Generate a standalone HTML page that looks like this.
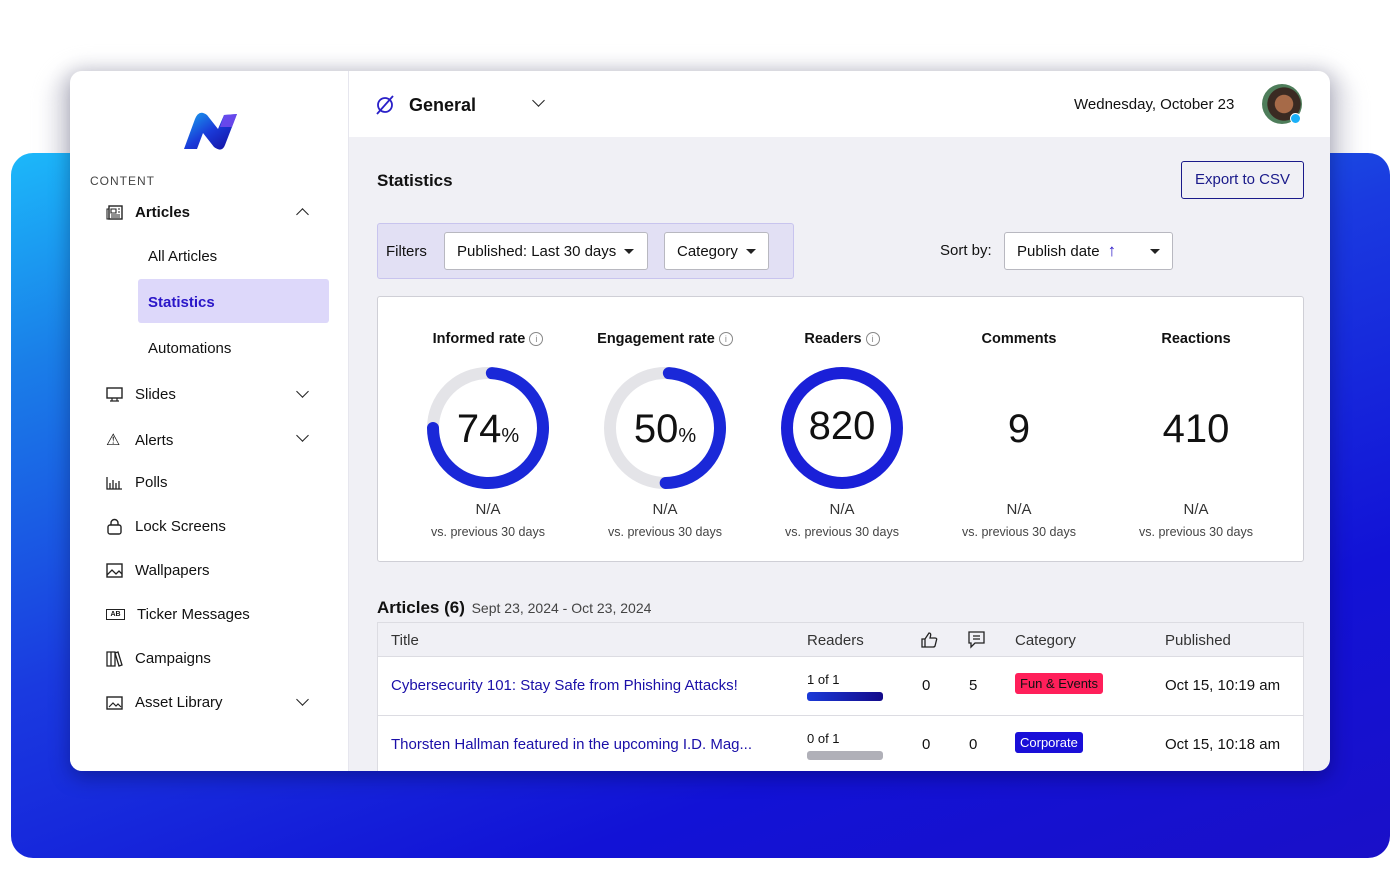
<!DOCTYPE html>
<html><head><meta charset="utf-8"><style>
*{box-sizing:border-box;margin:0;padding:0}
body{width:1400px;height:870px;background:#fff;font-family:"Liberation Sans","DejaVu Sans",sans-serif;color:#111;position:relative;overflow:hidden}
.bg{position:absolute;left:11px;top:153px;width:1379px;height:705px;border-radius:22px;background:linear-gradient(160deg,#1cb8fa 0%,#1a7ee8 18%,#1a3ae0 45%,#1212d6 75%,#1a10c8 100%)}
.shadow{position:absolute;left:48px;top:62px;width:1305px;height:748px;border-radius:40px;background:rgba(200,200,215,.35);filter:blur(8px)}
.card{position:absolute;left:70px;top:71px;width:1260px;height:700px;border-radius:12px;background:#f0f0f5;overflow:hidden;box-shadow:0 6px 20px rgba(0,0,40,.35)}
.side{position:absolute;left:0;top:0;width:279px;height:700px;background:#fff;border-right:1px solid #e6e6ee}
.hdr{position:absolute;left:279px;top:0;right:0;height:66px;background:#fff}
.t{position:absolute;white-space:nowrap}
.nav{position:absolute;left:36px;font-size:15px;display:flex;align-items:center;gap:12px}
.chev{position:absolute;left:228px;width:9px;height:9px;border-right:1.5px solid #222;border-bottom:1.5px solid #222;transform:rotate(45deg)}
.btn{position:absolute;background:#fff;border:1px solid #b8b8c0;border-radius:3px;font-size:15px;display:flex;align-items:center;padding-left:12px}
.tri{display:inline-block;width:0;height:0;border-left:5px solid transparent;border-right:5px solid transparent;border-top:5px solid #222;margin-left:8px}
.col{position:absolute;width:170px;text-align:center}
.col h4{font-size:14.5px;font-weight:bold;position:absolute;top:34px;width:100%}
.col .na{position:absolute;top:204px;width:100%;font-size:15px;color:#333}
.col .vs{position:absolute;top:228px;width:100%;font-size:12.5px;color:#444}
.big{position:absolute;top:110px;width:100%;font-size:40px}
.info{display:inline-block;width:14px;height:14px;border:1px solid #888;border-radius:50%;font-size:9px;line-height:12px;color:#888;font-weight:normal;vertical-align:1px}
.row{position:absolute;left:307px;width:927px;background:#fff;border:1px solid #dcdce2;border-top:none;font-size:15px}
.link{color:#1a0fa8}
.pill{position:absolute;color:#fff;font-size:13px;padding:3px 5px;border-radius:3px}
</style></head><body>
<div class="shadow"></div>
<div class="bg"></div>
<div class="card">
 <div class="side">
  <svg style="position:absolute;left:113px;top:38px" width="54" height="44" viewBox="0 0 54 44"><defs><linearGradient id="lg" x1="0" y1="0" x2="1" y2="1"><stop offset="0" stop-color="#1aa8f0"/><stop offset=".5" stop-color="#1a3ad8"/><stop offset="1" stop-color="#140a9a"/></linearGradient></defs><path d="M1 40 L12 10 Q16 0 24 6 L35 20 L41 6 L54 5 L42 36 Q39 44 31 38 L20 24 L14 40 Z" fill="url(#lg)"/><path d="M41 6 L54 5 L49 18 L37 18Z" fill="#7a4cf0" opacity=".8"/></svg>
  <div class="t" style="left:20px;top:103px;font-size:12px;letter-spacing:1px;color:#444">CONTENT</div>
  <div class="nav" style="top:133px;font-weight:bold"><svg width="17" height="15" viewBox="0 0 17 15"><rect x="3" y="1" width="13" height="13" fill="none" stroke="#222" stroke-width="1.4"/><path d="M3 4H1v10h2M5 4h5v4H5zM12 4h2M12 7h2M5 10h9M5 12h9" fill="none" stroke="#222" stroke-width="1.1"/></svg>Articles</div>
  <div class="chev" style="top:139px;transform:rotate(225deg)"></div>
  <div class="t" style="left:78px;top:177px;font-size:15px">All Articles</div>
  <div class="t" style="left:68px;top:208px;width:191px;height:44px;background:#ddd8fa;border-radius:3px"></div>
  <div class="t" style="left:78px;top:223px;font-size:15px;font-weight:bold;color:#2a16c8">Statistics</div>
  <div class="t" style="left:78px;top:269px;font-size:15px">Automations</div>
  <div class="nav" style="top:315px"><svg width="17" height="15" viewBox="0 0 17 15"><rect x="1" y="1" width="15" height="10" fill="none" stroke="#222" stroke-width="1.4"/><path d="M6 11v3M11 11v3M4 14h9" stroke="#222" stroke-width="1.2"/></svg>Slides</div><div class="chev" style="top:316px"></div>
  <div class="nav" style="top:359px"><span style="font-size:16px;width:17px">⚠</span>Alerts</div><div class="chev" style="top:360px"></div>
  <div class="nav" style="top:403px"><svg width="17" height="15" viewBox="0 0 17 15"><path d="M1 2v12h15M4 14V8M7 14V5M10 14V8M13 14V6" fill="none" stroke="#222" stroke-width="1.3"/></svg>Polls</div>
  <div class="nav" style="top:447px"><svg width="17" height="17" viewBox="0 0 17 17"><rect x="2" y="7" width="13" height="9" rx="2" fill="none" stroke="#222" stroke-width="1.4"/><path d="M5 7V5a3.5 3.5 0 0 1 7 0v2" fill="none" stroke="#222" stroke-width="1.4"/></svg>Lock Screens</div>
  <div class="nav" style="top:491px"><svg width="17" height="15" viewBox="0 0 17 15"><rect x="1" y="1" width="15" height="13" fill="none" stroke="#222" stroke-width="1.4"/><path d="M1 12l5-5 4 4 3-3 3 3" fill="none" stroke="#222" stroke-width="1.3"/></svg>Wallpapers</div>
  <div class="nav" style="top:535px"><span style="display:inline-block;width:19px;height:11px;border:1.4px solid #222;font-size:7px;font-weight:bold;line-height:9px;text-align:center">AB</span>Ticker Messages</div>
  <div class="nav" style="top:579px"><svg width="17" height="17" viewBox="0 0 17 17"><path d="M1 2h4v14H1zM5 2h4v14H5zM9 3l3-1 4 13-3 1z" fill="none" stroke="#222" stroke-width="1.3"/></svg>Campaigns</div>
  <div class="nav" style="top:623px"><svg width="17" height="15" viewBox="0 0 17 15"><rect x="1" y="2" width="15" height="12" fill="none" stroke="#222" stroke-width="1.4"/><path d="M3 12l4-4 3 3 2-2 3 3" fill="none" stroke="#222" stroke-width="1.2"/></svg>Asset Library</div><div class="chev" style="top:624px"></div>
 </div>
 <div class="hdr">
  <svg style="position:absolute;left:25px;top:23px" width="22" height="22" viewBox="0 0 22 22"><circle cx="11" cy="11" r="7" fill="none" stroke="#2a20c8" stroke-width="1.8"/><path d="M3 20 L19 2" stroke="#2a20c8" stroke-width="1.8"/></svg>
  <div class="t" style="left:60px;top:24px;font-size:18px;font-weight:bold">General</div>
  <div class="chev" style="left:185px;top:25px;border-color:#222"></div>
  <div class="t" style="left:725px;top:25px;font-size:15px">Wednesday, October 23</div>
  <div class="t" style="left:913px;top:13px;width:40px;height:40px;border-radius:50%;background:radial-gradient(circle at 55% 50%,#a66a48 0 30%,#3a2a22 32% 55%,#4e7d5a 57%)"></div>
  <div class="t" style="left:941px;top:42px;width:11px;height:11px;border-radius:50%;background:#1ab0f8;border:1.5px solid #fff"></div>
 </div>
 <div class="t" style="left:307px;top:100px;font-size:17px;font-weight:bold">Statistics</div>
 <div class="t" style="left:1111px;top:90px;width:123px;height:38px;border:1.5px solid #1a1a8a;border-radius:3px;font-size:15px;color:#1a1a8a;text-align:center;line-height:35px">Export to CSV</div>
 <div class="t" style="left:307px;top:152px;width:417px;height:56px;background:#e2e0f4;border:1px solid #c8c4ee;border-radius:3px"></div>
 <div class="t" style="left:316px;top:172px;font-size:15px">Filters</div>
 <div class="btn" style="left:374px;top:161px;width:204px;height:38px">Published: Last 30 days<span class="tri"></span></div>
 <div class="btn" style="left:594px;top:161px;width:105px;height:38px">Category<span class="tri"></span></div>
 <div class="t" style="left:870px;top:171px;font-size:15px">Sort by:</div>
 <div class="btn" style="left:934px;top:161px;width:169px;height:38px">Publish date <span style="color:#2a16c8;margin-left:8px;font-size:17px">↑</span><span class="tri" style="margin-left:34px"></span></div>
 <div class="t" style="left:307px;top:225px;width:927px;height:266px;background:#fff;border:1px solid #cfcfd6;border-radius:3px">
  <div class="col" style="left:25px"><h4>Informed rate <span class="info">i</span></h4>
   <svg style="position:absolute;left:24px;top:70px" width="122" height="122"><circle cx="61" cy="61" r="55" fill="none" stroke="#e4e4e8" stroke-width="12"/><circle cx="61" cy="61" r="55" fill="none" stroke="#1a28d8" stroke-width="12" stroke-linecap="round" stroke-dasharray="255 400" transform="rotate(-86 61 61)"/></svg>
   <div class="big">74<span style="font-size:20px">%</span></div><div class="na">N/A</div><div class="vs">vs. previous 30 days</div></div>
  <div class="col" style="left:202px"><h4>Engagement rate <span class="info">i</span></h4>
   <svg style="position:absolute;left:24px;top:70px" width="122" height="122"><circle cx="61" cy="61" r="55" fill="none" stroke="#e4e4e8" stroke-width="12"/><circle cx="61" cy="61" r="55" fill="none" stroke="#1a28d8" stroke-width="12" stroke-linecap="round" stroke-dasharray="168 400" transform="rotate(-86 61 61)"/></svg>
   <div class="big">50<span style="font-size:20px">%</span></div><div class="na">N/A</div><div class="vs">vs. previous 30 days</div></div>
  <div class="col" style="left:379px"><h4>Readers <span class="info">i</span></h4>
   <svg style="position:absolute;left:24px;top:70px" width="122" height="122"><circle cx="61" cy="61" r="55" fill="none" stroke="#1a20d8" stroke-width="12"/></svg>
   <div class="big" style="top:107px">820</div><div class="na">N/A</div><div class="vs">vs. previous 30 days</div></div>
  <div class="col" style="left:556px"><h4>Comments</h4><div class="big">9</div><div class="na">N/A</div><div class="vs">vs. previous 30 days</div></div>
  <div class="col" style="left:733px"><h4>Reactions</h4><div class="big">410</div><div class="na">N/A</div><div class="vs">vs. previous 30 days</div></div>
 </div>
 <div class="t" style="left:307px;top:527px;font-size:17px;font-weight:bold">Articles (6) <span style="font-weight:normal;font-size:14px;color:#444;margin-left:2px">Sept 23, 2024 - Oct 23, 2024</span></div>
 <div class="row" style="top:551px;height:35px;background:#f0f0f5;border-top:1px solid #dcdce2;color:#333">
  <span class="t" style="left:13px;top:9px">Title</span><span class="t" style="left:429px;top:9px">Readers</span>
  <svg class="t" style="left:543px;top:8px" width="17" height="17" viewBox="0 0 17 17"><path d="M1 8h3v8H1zM4 8l4-6c1.5 0 2 1 1.5 3L9 7h5c1.5 0 2 1 1.5 2l-1.5 6c-.3.8-1 1-2 1H4" fill="none" stroke="#222" stroke-width="1.3"/></svg>
  <svg class="t" style="left:590px;top:8px" width="17" height="18" viewBox="0 0 17 18"><path d="M1 1h15v11H7l-4 4v-4H1z" fill="none" stroke="#222" stroke-width="1.3"/><path d="M5 5h7M5 8h7" stroke="#222" stroke-width="1.2"/></svg>
  <span class="t" style="left:637px;top:9px">Category</span><span class="t" style="left:787px;top:9px">Published</span></div>
 <div class="row" style="top:586px;height:59px">
  <span class="t link" style="left:13px;top:20px">Cybersecurity 101: Stay Safe from Phishing Attacks!</span>
  <span class="t" style="left:429px;top:15px;font-size:13px">1 of 1</span><span class="t" style="left:429px;top:35px;width:76px;height:9px;border-radius:3px;background:linear-gradient(90deg,#1a3ad8,#140a8a)"></span>
  <span class="t" style="left:544px;top:20px">0</span><span class="t" style="left:591px;top:20px">5</span>
  <span class="pill" style="left:637px;top:16px;background:#ff1f5a;color:#111">Fun &amp; Events</span>
  <span class="t" style="left:787px;top:20px">Oct 15, 10:19 am</span></div>
 <div class="row" style="top:645px;height:60px">
  <span class="t link" style="left:13px;top:20px">Thorsten Hallman featured in the upcoming I.D. Mag...</span>
  <span class="t" style="left:429px;top:15px;font-size:13px">0 of 1</span><span class="t" style="left:429px;top:35px;width:76px;height:9px;border-radius:3px;background:#b0b0b8"></span>
  <span class="t" style="left:544px;top:20px">0</span><span class="t" style="left:591px;top:20px">0</span>
  <span class="pill" style="left:637px;top:16px;background:#1a0fd8">Corporate</span>
  <span class="t" style="left:787px;top:20px">Oct 15, 10:18 am</span></div>
</div>
</body></html>
